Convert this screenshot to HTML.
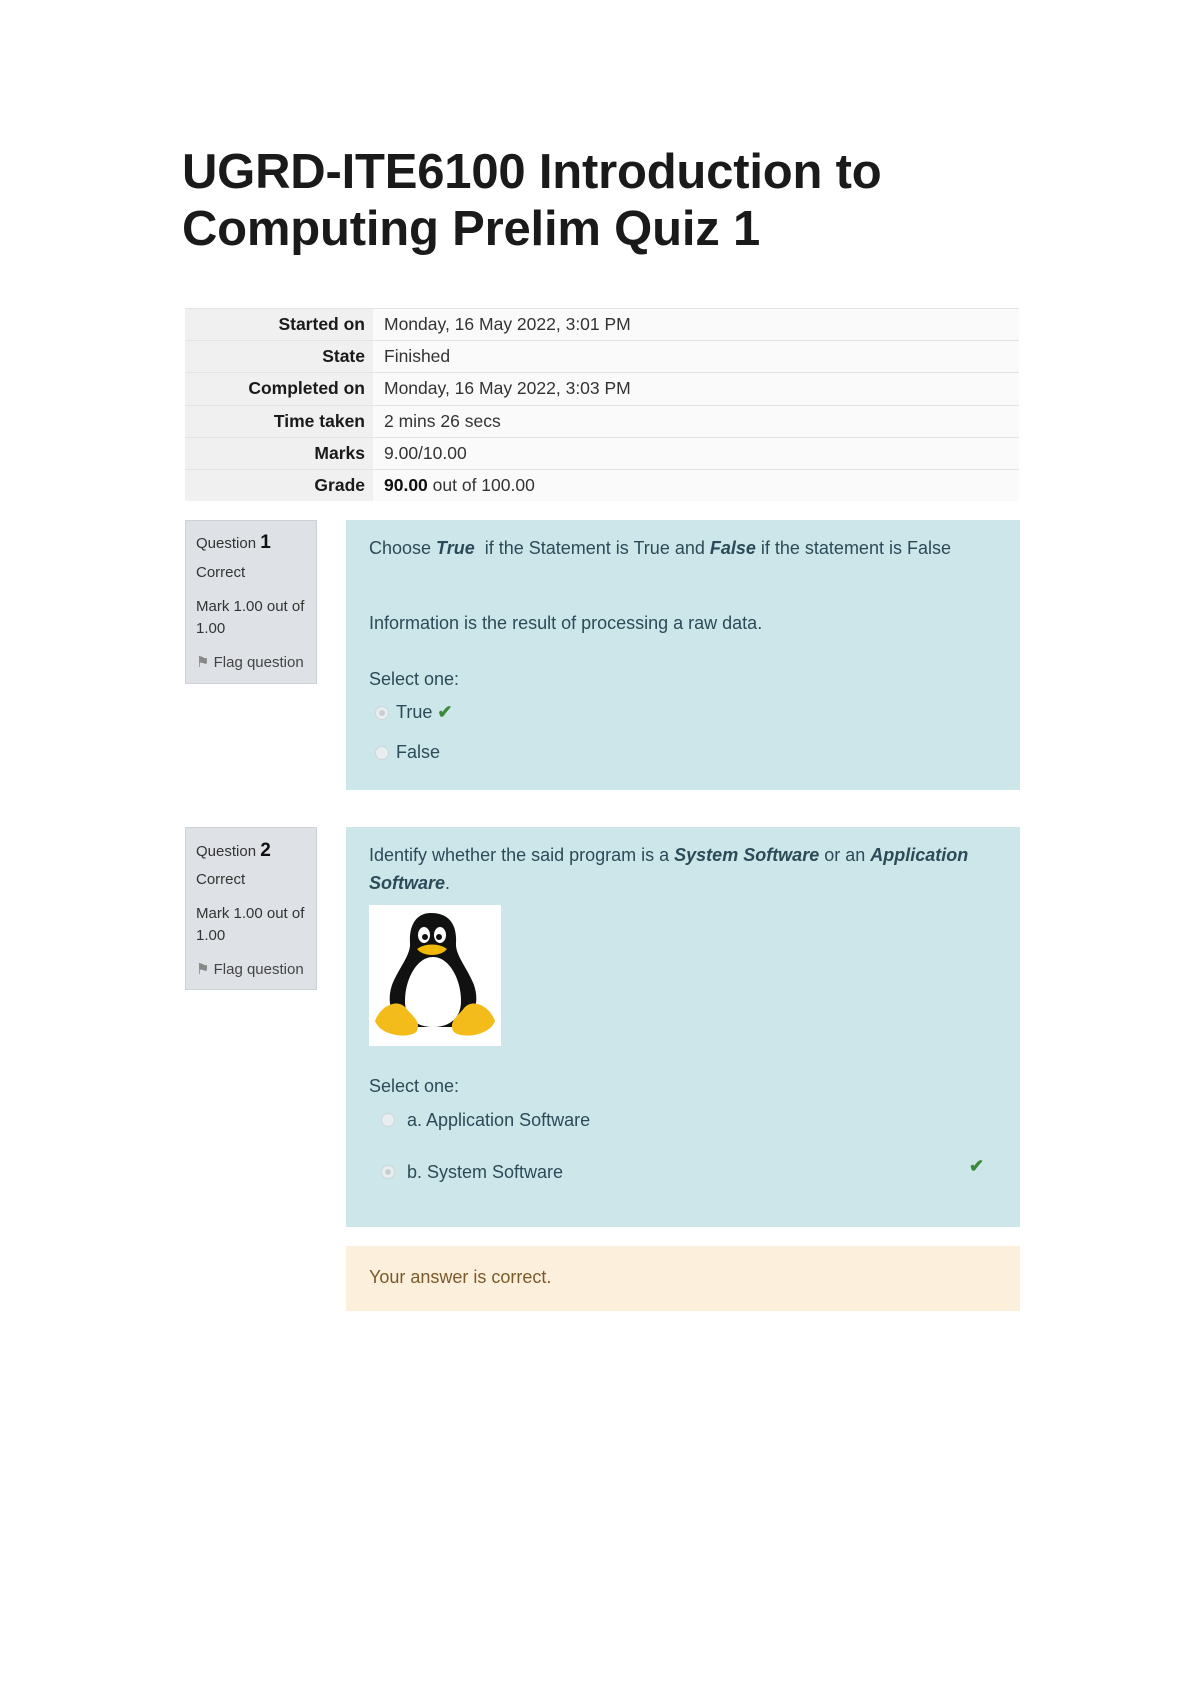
<!DOCTYPE html>
<html><head><meta charset="utf-8"><style>
*{margin:0;padding:0;box-sizing:border-box}
body{width:1200px;height:1698px;background:#fff;position:relative;font-family:"Liberation Sans",Arial,sans-serif;overflow:hidden}
.a{position:absolute;white-space:nowrap}
h1{position:absolute;left:182px;top:144px;font-size:49px;line-height:57px;font-weight:bold;color:#1a1a1a;letter-spacing:-0.2px}
.tbl{position:absolute;left:185px;top:308px;width:834px}
.row{height:32.2px;border-top:1px solid #e3e3e3;display:flex;font-size:17.5px;line-height:31px}
.row .l{width:188px;background:#f0f0f0;text-align:right;padding-right:8px;font-weight:bold;color:#1a1a1a}
.row .v{flex:1;background:#fafafa;padding-left:11px;color:#333}
.side{position:absolute;left:185px;width:132px;background:#dee2e6;border:1px solid #cdd2d7;font-size:15px;color:#333}
.side div{position:absolute;left:10px;white-space:nowrap}
.qc{position:absolute;left:346px;width:674px;background:#cde6ea;color:#2c4b58;font-size:18px}
.qc .a{left:23px}
.radio{position:absolute;width:14px;height:14px;border-radius:50%;background:#e8eef0;border:1px solid #cbd6d9}
.radio.s::after{content:"";position:absolute;left:3px;top:3px;width:6px;height:6px;border-radius:50%;background:#c9cfd1}
.chk{color:#3a8a3a;font-weight:bold}
</style></head><body>
<h1>UGRD-ITE6100 Introduction to<br>Computing Prelim Quiz 1</h1>
<div class="tbl">
<div class="row"><div class="l">Started on</div><div class="v">Monday, 16 May 2022, 3:01 PM</div></div>
<div class="row"><div class="l">State</div><div class="v">Finished</div></div>
<div class="row"><div class="l">Completed on</div><div class="v">Monday, 16 May 2022, 3:03 PM</div></div>
<div class="row"><div class="l">Time taken</div><div class="v">2 mins 26 secs</div></div>
<div class="row"><div class="l">Marks</div><div class="v">9.00/10.00</div></div>
<div class="row"><div class="l">Grade</div><div class="v"><b style="color:#111">90.00</b> out of 100.00</div></div>
</div>

<div class="side" style="top:520px;height:164px">
<div style="top:11px">Question <b style="font-size:19px;color:#111">1</b></div>
<div style="top:43px">Correct</div>
<div style="top:77px">Mark 1.00 out of</div>
<div style="top:99px">1.00</div>
<div style="top:132px;color:#444"><span style="color:#888">&#9873;</span> Flag question</div>
</div>
<div class="qc" style="top:520px;height:270px">
<div class="a" style="top:18px">Choose <b><i>True</i></b>&nbsp; if the Statement is True and <b><i>False</i></b> if the statement is False</div>
<div class="a" style="top:93px">Information is the result of processing a raw data.</div>
<div class="a" style="top:149px">Select one:</div>
<div class="radio s" style="left:29px;top:186px"></div>
<div class="a" style="left:50px;top:182px">True <span class="chk">&#10004;</span></div>
<div class="radio" style="left:29px;top:226px"></div>
<div class="a" style="left:50px;top:222px">False</div>
</div>

<div class="side" style="top:827px;height:163px">
<div style="top:12px">Question <b style="font-size:19px;color:#111">2</b></div>
<div style="top:43px">Correct</div>
<div style="top:77px">Mark 1.00 out of</div>
<div style="top:99px">1.00</div>
<div style="top:132px;color:#444"><span style="color:#888">&#9873;</span> Flag question</div>
</div>
<div class="qc" style="top:827px;height:400px">
<div class="a" style="top:18px">Identify whether the said program is a <b><i>System Software</i></b> or an <b><i>Application</i></b></div>
<div class="a" style="top:46px"><b><i>Software</i></b>.</div>
<svg style="position:absolute;left:23px;top:78px" width="132" height="141" viewBox="0 0 132 141">
<rect width="132" height="141" fill="#fff"/>
<path d="M62 8c-16 0-22 14-21 30 1 12-12 26-18 42-6 18 0 34 14 42h54c14-8 20-24 14-42-6-16-19-30-18-42 1-16-5-30-25-30z" fill="#111"/>
<path d="M64 52c-16 0-28 22-28 44 0 16 10 26 28 26s28-10 28-26c0-22-12-44-28-44z" fill="#fff"/>
<ellipse cx="55" cy="30" rx="6" ry="8" fill="#fff"/><ellipse cx="71" cy="30" rx="6" ry="8" fill="#fff"/>
<circle cx="56" cy="32" r="3" fill="#111"/><circle cx="70" cy="32" r="3" fill="#111"/>
<path d="M48 44c8-6 22-6 30 0-6 8-24 8-30 0z" fill="#f0b800"/>
<path d="M6 116c6-16 22-22 30-14 8 10 16 14 12 24-6 8-36 6-42-10z" fill="#f3bc1a"/>
<path d="M126 116c-6-16-22-22-30-14-8 10-16 14-12 24 6 8 36 6 42-10z" fill="#f3bc1a"/>
</svg>
<div class="a" style="top:249px">Select one:</div>
<div class="radio" style="left:35px;top:286px"></div>
<div class="a" style="left:61px;top:283px">a. Application Software</div>
<div class="radio s" style="left:35px;top:338px"></div>
<div class="a" style="left:61px;top:335px">b. System Software</div>
<div class="a chk" style="left:623px;top:329px">&#10004;</div>
</div>

<div style="position:absolute;left:346px;top:1246px;width:674px;height:65px;background:#fcefdc;color:#7a5a2a;font-size:18px">
<div class="a" style="left:23px;top:21px">Your answer is correct.</div>
</div>
</body></html>
